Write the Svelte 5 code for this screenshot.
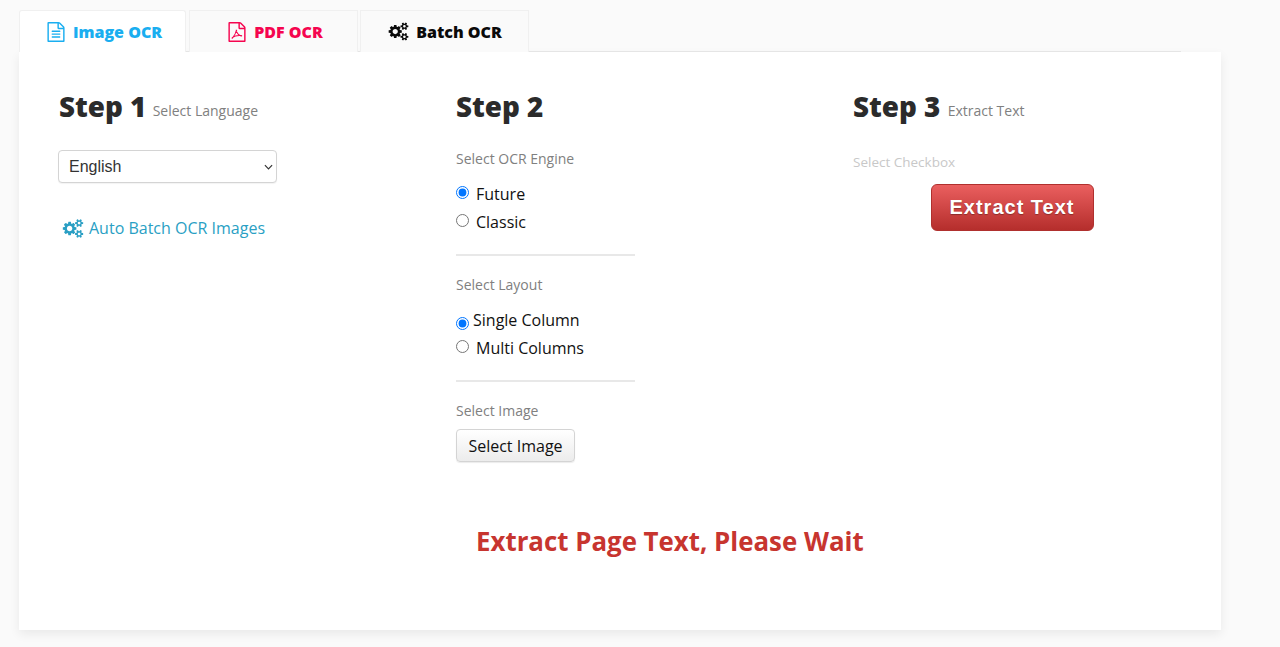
<script>
  const cogs =
    "M960 896q0-106-75-181t-181-75-181 75-75 181 75 181 181 75 181-75 75-181zm768 512q0-52-38-90t-90-38-90 38-38 90q0 53 37.5 90.5t90.5 37.5 90.5-37.5 37.5-90.5zm0-1024q0-52-38-90t-90-38-90 38-38 90q0 53 37.5 90.5t90.5 37.5 90.5-37.5 37.5-90.5zm-384 421v185q0 10-7 19.5t-16 10.5l-155 24q-11 35-32 76 34 48 90 115 7 11 7 20 0 12-7 19-23 30-82.5 89.5t-78.5 59.5q-11 0-21-7l-115-90q-37 19-77 31-11 108-23 155-7 24-30 24h-186q-11 0-20-7.5t-10-17.5l-23-153q-34-10-75-31l-118 89q-7 7-20 7-11 0-21-8-144-133-144-160 0-9 7-19 10-14 41-53t47-61q-23-44-35-82l-152-24q-10-1-17-9.5t-7-19.5v-185q0-10 7-19.5t16-10.5l155-24q11-35 32-76-34-48-90-115-7-11-7-20 0-12 7-20 22-30 82-89t79-59q11 0 21 7l115 90q34-18 77-32 11-108 23-154 7-24 30-24h186q11 0 20 7.5t10 17.5l23 153q34 10 75 31l118-89q8-7 20-7 11 0 21 8 144 133 144 160 0 8-7 19-12 16-42 54t-45 60q23 48 34 82l152 23q10 2 17 10.5t7 19.5zm640 533v140q0 16-149 31-12 27-30 52 51 113 51 138 0 4-4 7-122 71-124 71-8 0-46-47t-52-68q-20 2-30 2t-30-2q-14 21-52 68t-46 47q-2 0-124-71-4-3-4-7 0-25 51-138-18-25-30-52-149-15-149-31v-140q0-16 149-31 13-29 30-52-51-113-51-138 0-4 4-7 4-2 35-20t59-34 30-16q8 0 46 46.5t52 67.5q20-2 30-2t30 2q51-71 92-112l6-2q4 0 124 70 4 3 4 7 0 25-51 138 17 23 30 52 149 15 149 31zm0-1024v140q0 16-149 31-12 27-30 52 51 113 51 138 0 4-4 7-122 71-124 71-8 0-46-47t-52-68q-20 2-30 2t-30-2q-14 21-52 68t-46 47q-2 0-124-71-4-3-4-7 0-25 51-138-18-25-30-52-149-15-149-31v-140q0-16 149-31 13-29 30-52-51-113-51-138 0-4 4-7 4-2 35-20t59-34 30-16q8 0 46 46.5t52 67.5q20-2 30-2t30 2q51-71 92-112l6-2q4 0 124 70 4 3 4 7 0 25-51 138 17 23 30 52 149 15 149 31z";
  const fileOutline =
    "M1596 380q28 28 48 76t20 88v1152q0 40-28 68t-68 28h-1344q-40 0-68-28t-28-68v-1600q0-40 28-68t68-28h896q40 0 88 20t76 48zm-444-244v376h376q-10-29-22-41l-313-313q-12-12-41-22zm384 1528v-1024h-416q-40 0-68-28t-28-68v-416h-768v1536h1280z";
  const fileLines =
    "M512 800q0-14 9-23t23-9h704q14 0 23 9t9 23v64q0 14-9 23t-23 9h-704q-14 0-23-9t-9-23v-64zm736 224q14 0 23 9t9 23v64q0 14-9 23t-23 9h-704q-14 0-23-9t-9-23v-64q0-14 9-23t23-9h704zm0 256q14 0 23 9t9 23v64q0 14-9 23t-23 9h-704q-14 0-23-9t-9-23v-64q0-14 9-23t23-9h704z";
</script>

<div class="page">
  <div class="tabs">
    <div class="tab active">
      <svg class="ico" viewBox="0 0 1792 1792" aria-hidden="true"><path d={fileOutline} /><path d={fileLines} /></svg>
      Image OCR
    </div>
    <div class="tab pdf">
      <svg class="ico" viewBox="0 0 1792 1792" aria-hidden="true">
        <path d={fileOutline} />
        <path class="squiggle" d="M830 760c-30 180-130 430-330 660-50 60-70 30-30-10 150-130 500-230 800-200 70 10 60 60-10 40-180-50-340-220-420-400-20-60-10-110 10-110 20 0 20 50-20 20z" />
      </svg>
      PDF OCR
    </div>
    <div class="tab batch">
      <svg class="cogs" viewBox="0 0 2048 1792" aria-hidden="true"><path d={cogs} /></svg>
      Batch OCR
    </div>
  </div>

  <div class="panel">
    <div class="steps">
      <section class="col">
        <h2>Step 1 <small>Select Language</small></h2>
        <div class="lang-wrap">
          <select class="lang">
            <option>English</option>
            <option>French</option>
            <option>German</option>
          </select>
          <svg class="chev" viewBox="0 0 10 6" aria-hidden="true"><path d="M1 1l4 4 4-4" /></svg>
        </div>
        <a class="auto" href="#auto">
          <svg class="cogs" viewBox="0 0 2048 1792" aria-hidden="true"><path d={cogs} /></svg>
          Auto Batch OCR Images
        </a>
      </section>

      <section class="col">
        <h2>Step 2</h2>
        <div class="label first">Select OCR Engine</div>
        <label class="opt"><input type="radio" name="engine" checked /> Future</label>
        <label class="opt"><input type="radio" name="engine" /> Classic</label>
        <hr />
        <div class="label">Select Layout</div>
        <label class="opt tight"><input type="radio" name="layout" checked /> Single Column</label>
        <label class="opt"><input type="radio" name="layout" /> Multi Columns</label>
        <hr />
        <div class="label">Select Image</div>
        <button class="pick">Select Image</button>
      </section>

      <section class="col">
        <h2>Step 3 <small class="s3">Extract Text</small></h2>
        <div class="label check">Select Checkbox</div>
        <div class="go-row"><button class="go">Extract Text</button></div>
      </section>
    </div>

    <p class="wait">Extract Page Text, Please Wait</p>
  </div>
</div>

<style>
  :global(body) {
    background: #fafafa;
    font-family: "Open Sans", sans-serif;
  }

  .page {
    padding: 10px 59px 17px 19px;
  }

  .tabs {
    display: flex;
    gap: 2px;
    width: 1162px;
    height: 42px;
    box-sizing: border-box;
    border-bottom: 1px solid #e8e8e8;
  }

  .tab {
    width: 169px;
    height: 42px;
    box-sizing: border-box;
    padding-left: 3px;
    display: flex;
    align-items: center;
    justify-content: center;
    gap: 7px;
    font-size: 16px;
    font-weight: 800;
    border: 1px solid #f0f0f0;
    border-bottom: none;
    background: #fafafa;
  }

  .tab.active {
    width: 167px;
    margin-right: 1px;
    color: #1aaef0;
    background: #fff;
    border-radius: 3px 3px 0 0;
    position: relative;
    z-index: 1;
  }
  .tab.pdf {
    color: #f5054f;
  }
  .tab.batch {
    padding-left: 1px;
    color: #0a0a0a;
  }

  .ico {
    width: 20px;
    height: 20px;
    fill: currentColor;
  }
  .squiggle {
    fill: none;
    stroke: currentColor;
    stroke-width: 90;
  }
  .tab .cogs {
    width: 21px;
    height: 19px;
    fill: currentColor;
  }

  .panel {
    background: #fff;
    height: 578px;
    box-shadow: 0 4px 10px rgba(0, 0, 0, 0.07);
  }

  .steps {
    display: flex;
  }

  .col {
    flex: 0 0 397px;
    box-sizing: border-box;
    padding: 34px 0 0 40px;
  }

  h2 {
    margin: 0;
    font-size: 27.8px;
    line-height: 40px;
    font-weight: 800;
    color: #2b2b2b;
  }

  small {
    font-size: 14px;
    font-weight: 400;
    color: #808080;
    margin-left: -1px;
    vertical-align: 1px;
  }
  small.s3 {
    margin-left: 0;
  }

  .lang-wrap {
    position: relative;
    width: 219px;
    margin: 19px 0 0 -1px;
  }

  .lang {
    display: block;
    width: 219px;
    height: 33px;
    padding: 0 10px;
    appearance: none;
    background: #fff;
    border: 1px solid #d4d4d4;
    border-radius: 4px;
    font-family: "Liberation Sans", sans-serif;
    font-size: 16px;
    color: #333;
    box-shadow: 0 1px 1px rgba(0, 0, 0, 0.05);
  }

  .chev {
    position: absolute;
    right: 4px;
    top: 14px;
    width: 9px;
    height: 6px;
    fill: none;
    stroke: #333;
    stroke-width: 1.3;
  }

  .auto {
    display: flex;
    align-items: center;
    gap: 5px;
    margin: 33px 0 0 3px;
    font-size: 16px;
    line-height: 24px;
    color: #2a9fc4;
    text-decoration: none;
  }
  .auto .cogs {
    width: 22px;
    height: 19px;
    fill: currentColor;
  }

  .label {
    font-size: 14px;
    line-height: 20px;
    color: #808080;
  }
  .label.first {
    margin-top: 23px;
  }
  .label.check {
    margin-top: 21px;
    font-size: 13.5px;
    color: #c8c8c8;
  }

  .opt {
    display: flex;
    align-items: center;
    height: 28px;
    font-size: 16px;
    color: #111;
    gap: 7px;
  }
  .label + .opt {
    margin-top: 11px;
  }
  .opt input {
    width: 13px;
    height: 13px;
    margin: 0;
    position: relative;
    top: -2px;
  }
  .opt.tight {
    gap: 4px;
  }
  .opt.tight input {
    top: 3px;
  }

  hr {
    width: 179px;
    margin: 18px 0 19px;
    border: none;
    border-top: 2px solid #e8e8e8;
  }

  .pick {
    display: block;
    width: 119px;
    height: 33px;
    margin-top: 8px;
    padding: 0;
    font-family: "Open Sans", sans-serif;
    font-size: 16px;
    color: #111;
    background: linear-gradient(#fff, #ececec);
    border: 1px solid #d4d4d4;
    border-radius: 4px;
    box-shadow: 0 1px 1px rgba(0, 0, 0, 0.08);
  }

  .go-row {
    margin-top: 12px;
    width: 318px;
    display: flex;
    justify-content: center;
  }

  .go {
    width: 163px;
    height: 47px;
    padding: 0;
    font-family: "Liberation Sans", sans-serif;
    font-size: 20px;
    font-weight: 700;
    letter-spacing: 1px;
    color: #fff;
    background: linear-gradient(#ea5f5f, #b52e2c);
    border: 1px solid #b0302e;
    border-radius: 6px;
    text-shadow: 0 1px 1px rgba(0, 0, 0, 0.3);
  }

  .wait {
    margin: 0 0 0 457px;
    font-size: 25.85px;
    font-weight: 700;
    line-height: 36px;
    color: #c7352f;
    padding-top: 61px;
  }
</style>
